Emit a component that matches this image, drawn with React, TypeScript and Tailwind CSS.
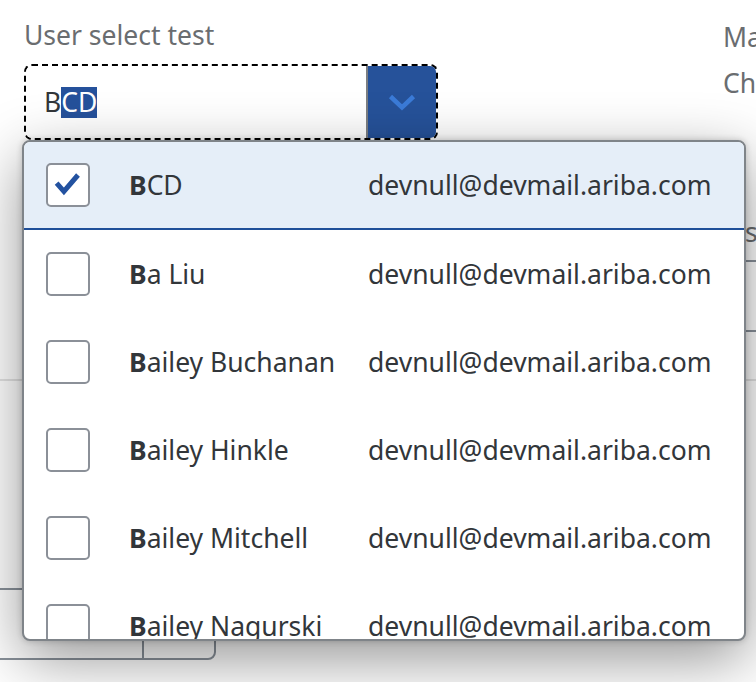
import React from "react";

const rows = [
  { rest: "CD", checked: true },
  { rest: "a Liu", checked: false },
  { rest: "ailey Buchanan", checked: false },
  { rest: "ailey Hinkle", checked: false },
  { rest: "ailey Mitchell", checked: false },
  { rest: "ailey Nagurski", checked: false },
];

function Check() {
  return (
    <svg width="44" height="44" viewBox="0 0 44 44" className="block">
      <path
        d="M9.5 20 L17.5 29 L33 11"
        fill="none"
        stroke="#2352a0"
        strokeWidth="5.5"
        strokeLinejoin="miter"
      />
    </svg>
  );
}

export default function App() {
  return (
    <div className="relative w-[756px] h-[682px] overflow-hidden bg-white font-['Noto_Sans',sans-serif] text-[26.5px]">
      {/* top row */}
      <div className="flex">
        <div className="w-[438px] shrink-0 pl-[24px] pt-[17px]">
          <div className="leading-[36px] text-[#6a6d70] whitespace-nowrap">User select test</div>
          <div className="mt-[11px] h-[76px] w-[414px] border-2 border-dashed border-black rounded-[8px] flex overflow-hidden">
            <div className="flex-1 bg-white flex items-center pl-[18px] text-[#32363a] leading-none">
              <span>B</span>
              <span className="inline-block h-[31px] leading-[31px] bg-[#25519b] text-white">CD</span>
            </div>
            <div className="w-[70px] bg-[#26529a] border-l-2 border-[#7b7e82] flex items-center justify-center">
              <svg width="28" height="17" viewBox="0 0 28 17">
                <path d="M2.5 2.5 L14 13.5 L25.5 2.5" fill="none" stroke="#3b7bd8" strokeWidth="4.5" />
              </svg>
            </div>
          </div>
        </div>
        <div className="ml-[285px] pt-[14px] text-[#6a6d70] leading-[46px] whitespace-nowrap">
          <div>Ma</div>
          <div>Ch</div>
        </div>
      </div>

      {/* background content under the popover */}
      <div className="flex">
        <div className="w-[745px] shrink-0" />
        <div className="shrink-0">
          <div className="mt-[74px] leading-[36px] text-[#6a6d70] whitespace-nowrap">s</div>
          <div className="mt-[10px] h-[72px] w-[40px] border-y-2 border-[#89919a]" />
        </div>
      </div>
      <div className="mt-[47px] h-[2px] w-full bg-[#e3e3e3]" />
      <div className="mt-[207px] -ml-[10px] h-[72px] w-[226px] border-2 border-[#89919a] rounded-r-[8px] flex">
        <div className="flex-1 border-r-2 border-[#89919a]" />
        <div className="w-[70px]" />
      </div>

      {/* popover */}
      <div className="absolute left-[22px] top-[140px] w-[724px] h-[501px] border-2 border-[#7f8489] rounded-[8px] bg-white overflow-hidden shadow-[0_18px_60px_rgba(0,0,0,0.42),0_0_6px_rgba(0,0,0,0.2)]">
        {rows.map((r, i) => (
          <div
            key={i}
            className={
              r.checked
                ? "h-[88px] flex items-center bg-[#e5eef8] border-b-2 border-[#1f4f99] text-[#32363a]"
                : "h-[88px] flex items-center text-[#32363a]"
            }
          >
            <div className="ml-[22px] w-[44px] h-[44px] shrink-0 border-2 border-[#8b9098] rounded-[5px] bg-white flex items-center justify-center">
              {r.checked ? <Check /> : null}
            </div>
            <div className="ml-[39px] w-[239px] shrink-0 leading-none whitespace-nowrap">
              <span className="font-bold">B</span>
              {r.rest}
            </div>
            <div className="leading-none whitespace-nowrap">devnull@devmail.ariba.com</div>
          </div>
        ))}
      </div>
    </div>
  );
}
